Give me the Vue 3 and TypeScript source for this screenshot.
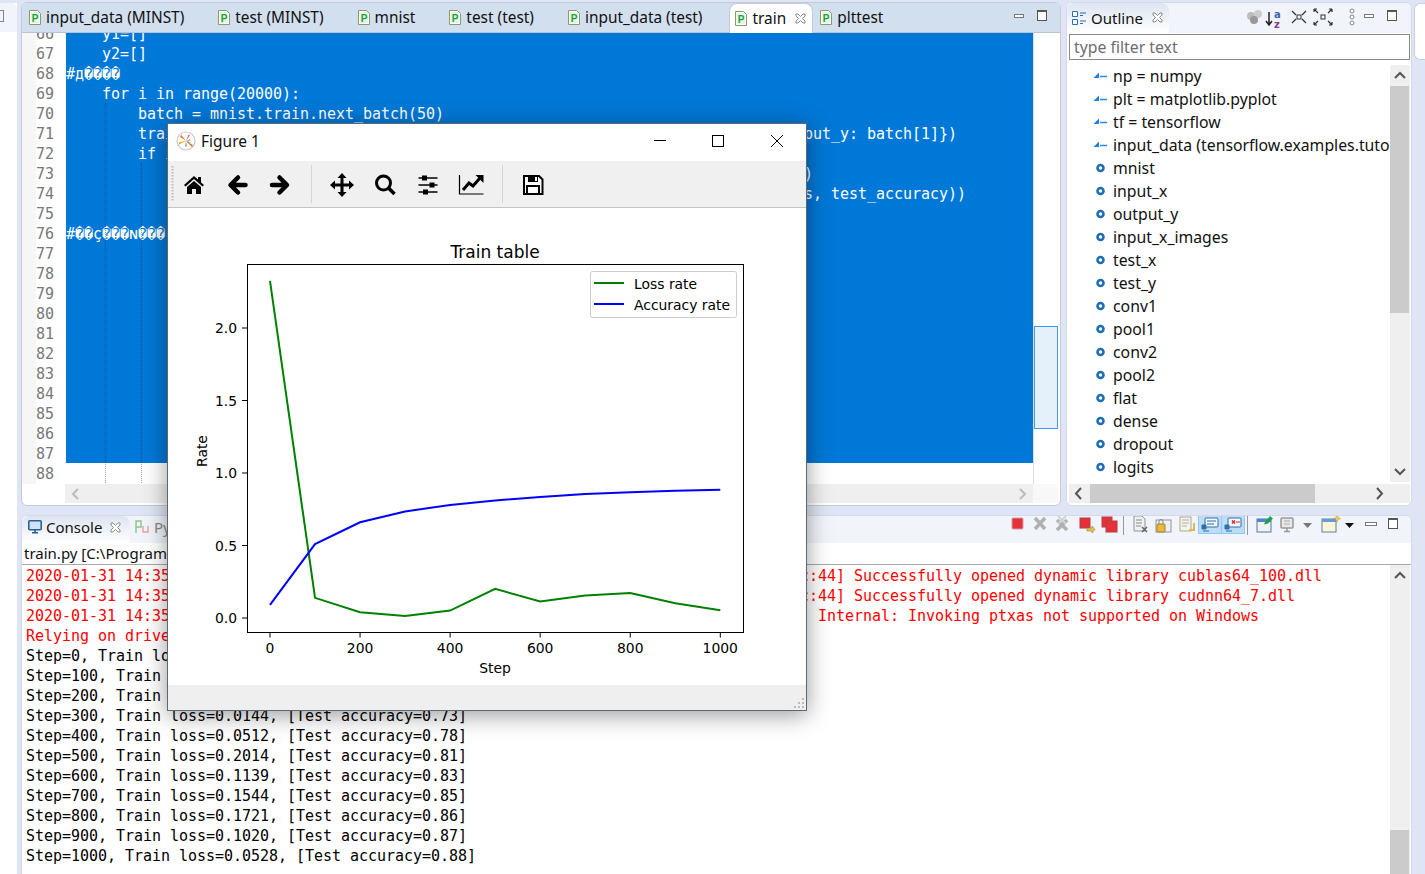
<script setup lang="ts">
const editorTabs = [
  { name: 'input_data (MINST)', active: false },
  { name: 'test (MINST)', active: false },
  { name: 'mnist', active: false },
  { name: 'test (test)', active: false },
  { name: 'input_data (test)', active: false },
  { name: 'train', active: true },
  { name: 'plttest', active: false },
]

const code: Record<number, string> = {
  66: '    y1=[]',
  67: '    y2=[]',
  68: '#д����',
  69: '    for i in range(20000):',
  70: '        batch = mnist.train.next_batch(50)',
  71: '        train_loss, train_op_ = sess.run([loss, train_op], {input_x: batch[0], output_y: batch[1]})',
  72: '        if i % 100 == 0:',
  73: '            test_loss, test_accuracy = sess.run([loss, accuracy], feed_dict=t_dict)',
  74: '            print("Step=%d, Train loss=%.4f, [Test accuracy=%.2f]" % (i, train_loss, test_accuracy))',
  76: '#��ç���ɴ���',
}
const lineNumbers = Array.from({ length: 23 }, (_, i) => 66 + i)

const outline = [
  ['np = numpy', 'imp'], ['plt = matplotlib.pyplot', 'imp'], ['tf = tensorflow', 'imp'],
  ['input_data (tensorflow.examples.tutorials.mnist)', 'imp'], ['mnist', 'var'], ['input_x', 'var'],
  ['output_y', 'var'], ['input_x_images', 'var'], ['test_x', 'var'], ['test_y', 'var'], ['conv1', 'var'],
  ['pool1', 'var'], ['conv2', 'var'], ['pool2', 'var'], ['flat', 'var'], ['dense', 'var'], ['dropout', 'var'], ['logits', 'var'],
]

const loss = [2.325, 0.1389, 0.04, 0.0144, 0.0512, 0.2014, 0.1139, 0.1544, 0.1721, 0.102, 0.0528]
const acc = [0.09, 0.51, 0.66, 0.73, 0.78, 0.81, 0.83, 0.85, 0.86, 0.87, 0.88]
const accCurve = [0.09, 0.51, 0.66, 0.735, 0.78, 0.81, 0.835, 0.855, 0.868, 0.878, 0.885]

const consoleLines = [
  { t: '2020-01-31 14:35:44.406421: I tensorflow/stream_executor/platform/default/dso_loader.cc:44] Successfully opened dynamic library cublas64_100.dll', err: true },
  { t: '2020-01-31 14:35:44.410187: I tensorflow/stream_executor/platform/default/dso_loader.cc:44] Successfully opened dynamic library cudnn64_7.dll', err: true },
  { t: '2020-01-31 14:35:47.123456: W tensorflow/compiler/jit/mark_for_compilation_pass.cc:141] Internal: Invoking ptxas not supported on Windows', err: true },
  { t: 'Relying on driver to perform ptx compilation.', err: true },
  ...loss.map((l, i) => ({
    t: `Step=${i * 100}, Train loss=${l.toFixed(4)}, [Test accuracy=${acc[i].toFixed(2)}]`,
    err: false,
  })),
]

const px = (v: number) => 270 + 0.4503 * v
const py = (v: number) => 618 - 145 * v
const toPoints = (arr: number[]) => arr.map((v, i) => `${px(i * 100)},${py(v)}`).join(' ')
const xTicks = [0, 200, 400, 600, 800, 1000]
const yTicks = [0, 0.5, 1, 1.5, 2]
</script>

<template>
  <div class="root">
    <div class="left-strip"><div class="left-tab"><span class="left-mark"></span></div></div>

    <div class="work">
      <div class="top">
        <section class="editor">
          <div class="editor-tabs">
            <div v-for="tab in editorTabs" :key="tab.name" class="etab" :class="{ active: tab.active }">
              <svg class="picon" width="12" height="15" viewBox="0 0 12 15">
                <path d="M.5.5h8l3 3v11H.5z" fill="#fff" stroke="#8a9a6a" />
                <rect x="2" y="2" width="8" height="11" fill="#e8f5e4" />
                <text x="6" y="11.5" text-anchor="middle" class="picon-t">P</text>
              </svg>
              <span>{{ tab.name }}</span>
              <svg v-if="tab.active" class="xicon" width="11" height="11" viewBox="0 0 11 11">
                <path d="M1 1h2l2.500 2.500L8 1h2v2L7.500 5.500 10 8v2H8L5.500 7.500 3 10H1V8l2.500-2.500L1 3z" fill="#fff" stroke="#8b8b8b" />
              </svg>
            </div>
            <div class="win-btns e">
              <span class="min"></span><span class="max"></span>
            </div>
          </div>
          <div class="editor-body">
            <div class="gutter-pad"></div>
            <div class="numbers">
              <div v-for="n in lineNumbers" :key="n" class="num">{{ n }}</div>
            </div>
            <div class="code">
              <div v-for="n in lineNumbers" :key="n" class="cl" :class="{ sel: n < 88 }">{{ code[n] || ' ' }}</div>
              <i class="guide g1"></i><i class="guide g2"></i>
            </div>
            <div class="ruler"><div class="ruler-box"></div></div>
          </div>
          <div class="editor-hscroll">
            <div class="hs-blank"></div>
            <div class="hs-track">
              <svg width="10" height="12" viewBox="0 0 10 12"><path d="M7 1 2 6l5 5" fill="none" stroke="#bbb" stroke-width="2" /></svg>
              <svg width="10" height="12" viewBox="0 0 10 12"><path d="M3 1l5 5-5 5" fill="none" stroke="#bbb" stroke-width="2" /></svg>
            </div>
            <div class="hs-corner"></div>
          </div>
        </section>

        <section class="outline">
          <div class="outline-head">
            <div class="otab">
              <svg width="14" height="15" viewBox="0 0 14 15">
                <path d="M.5 1.500h5v5h-5zM.5 9.500h5v5h-5z" fill="#fff" stroke="#2a6fb5" />
                <path d="M8 3h6M8 5.500h3M8 11h6M8 13.500h3" stroke="#2a6fb5" />
              </svg>
              <span>Outline</span>
              <svg class="xicon" width="11" height="11" viewBox="0 0 11 11">
                <path d="M1 1h2l2.500 2.500L8 1h2v2L7.500 5.500 10 8v2H8L5.500 7.500 3 10H1V8l2.500-2.500L1 3z" fill="#fff" stroke="#8b8b8b" />
              </svg>
            </div>
            <svg class="otools" width="160" height="24" viewBox="0 0 160 24">
              <circle cx="5" cy="10" r="4" fill="#bbb" /><circle cx="12" cy="8" r="4" fill="#ccc" /><circle cx="8" cy="14" r="4" fill="#999" />
              <path d="M23 6v13M20 15l3 4 3-4" fill="none" stroke="#222" stroke-width="1.500" />
              <text x="28" y="12" class="az a">a</text><text x="28" y="22" class="az z">z</text>
              <rect x="51" y="9" width="4" height="4" fill="none" stroke="#333" />
              <path d="M46 5l4 4M60 5l-4 4M46 17l4-4M60 17l-4-4" stroke="#333" stroke-width="1.200" />
              <rect x="75" y="9" width="4" height="4" fill="none" stroke="#333" />
              <path d="M68 3h3M68 3v3M86 3h-3M86 3v3M68 19h3M68 19v-3M86 19h-3M86 19v-3M68 3l4 4M86 3l-4 4M68 19l4-4M86 19l-4-4" stroke="#333" stroke-width="1.200" />
              <circle cx="106" cy="5" r="2" fill="#fff" stroke="#888" /><circle cx="106" cy="11" r="2" fill="#fff" stroke="#888" /><circle cx="106" cy="17" r="2" fill="#fff" stroke="#888" />
            </svg>
            <div class="win-btns o">
              <span class="min"></span><span class="max"></span>
            </div>
          </div>
          <div class="filter">type filter text</div>
          <div class="tree-wrap">
            <div class="tree">
              <div v-for="row in outline" :key="row[0]" class="trow">
                <svg width="14" height="10" viewBox="0 0 14 10" class="ticon">
                  <template v-if="row[1] === 'imp'">
                    <path d="M6 1.500V7H.5z" fill="#1f7fe0" /><path d="M7 5.500h7" stroke="#2a8cf0" stroke-width="1.600" />
                  </template>
                  <circle v-else cx="7.500" cy="5" r="3" fill="#fff" stroke="#1f6fb0" stroke-width="2.600" />
                </svg>
                <span>{{ row[0] }}</span>
              </div>
            </div>
            <div class="vscroll">
              <svg class="arrow" width="20" height="21" viewBox="0 0 20 21"><path d="M5 13l5-5 5 5" fill="none" stroke="#555" stroke-width="2" /></svg>
              <div class="vthumb"></div>
              <div class="vrest"></div>
              <svg class="arrow" width="20" height="21" viewBox="0 0 20 21"><path d="M5 8l5 5 5-5" fill="none" stroke="#555" stroke-width="2" /></svg>
            </div>
          </div>
          <div class="o-hscroll">
            <svg width="21" height="19" viewBox="0 0 21 19"><path d="M12 4 7 9.500l5 5.500" fill="none" stroke="#555" stroke-width="2" /></svg>
            <div class="o-hthumb"></div>
            <div class="o-hrest"></div>
            <svg width="21" height="19" viewBox="0 0 21 19"><path d="M9 4l5 5.500L9 15" fill="none" stroke="#555" stroke-width="2" /></svg>
          </div>
        </section>
      </div>

      <section class="console">
        <div class="console-head">
          <div class="ctab">
            <svg width="14" height="14" viewBox="0 0 14 14">
              <rect x=".8" y=".8" width="12.400" height="9" rx="1" fill="#cfe3f5" stroke="#2a5f95" stroke-width="1.600" />
              <path d="M4 12.800h6M7 10v3" stroke="#2a5f95" stroke-width="1.600" />
            </svg>
            <span>Console</span>
            <svg class="xicon" width="11" height="11" viewBox="0 0 11 11">
              <path d="M1 1h2l2.500 2.500L8 1h2v2L7.500 5.500 10 8v2H8L5.500 7.500 3 10H1V8l2.500-2.500L1 3z" fill="#fff" stroke="#8b8b8b" />
            </svg>
          </div>
          <div class="ctab2">
            <svg width="14" height="14" viewBox="0 0 14 14">
              <path d="M1 13V1h5v6H1" fill="none" stroke="#8cc88c" stroke-width="1.500" />
              <path d="M8 6v6h5V6" fill="none" stroke="#eea0a0" stroke-width="1.500" />
            </svg>
            <span>PyUnit</span>
          </div>
          <svg class="ctools" width="345" height="24" viewBox="0 0 345 24">
            <rect x="1" y="6" width="11" height="11" rx="1" fill="#e8303a" stroke="#c9a0a0" />
            <path d="M24 6l10 11M34 6L24 17" stroke="#b0b0b0" stroke-width="3.500" />
            <path d="M46 8l10 10M56 8L46 18" stroke="#b0b0b0" stroke-width="3.500" /><path d="M47 4l8 8M55 4l-8 8" stroke="#d2d2d2" stroke-width="2" />
            <rect x="69" y="6" width="10" height="10" fill="#e8303a" stroke="#b04040" /><path d="M76 16h5v-2l3 3.500-3 3.500v-2h-5z" fill="#e8c050" stroke="#a08030" stroke-width=".6" />
            <rect x="91" y="5" width="10" height="10" fill="#e8303a" stroke="#b04040" /><rect x="95" y="9" width="11" height="11" fill="#e8303a" stroke="#b04040" />
            <path d="M112.500 4v19" stroke="#999" />
            <path d="M123 4h8l3 3v12h-11z" fill="#f2f2e8" stroke="#8a94a8" /><path d="M125 8h6M125 11h6M125 14h5" stroke="#7a8ca8" /><path d="M131 15l5 5M136 15l-5 5" stroke="#666" stroke-width="1.600" />
            <rect x="145" y="8" width="15" height="12" fill="#f0f0f0" stroke="#8a94a8" /><rect x="146" y="12" width="8" height="8" rx="1" fill="#e8b840" stroke="#a88020" /><path d="M148 12V9.500a2 2 0 0 1 4 0V12" fill="none" stroke="#888" />
            <rect x="169" y="5" width="11" height="14" fill="#f6f4e6" stroke="#b0a890" /><path d="M171 8h7M171 11h7M171 14h5" stroke="#a8b0b8" /><path d="M178 18h5v-7" fill="none" stroke="#d8b860" stroke-width="2" />
            <rect class="sel-btn" x="187.500" y="1.500" width="23" height="20" />
            <rect class="sel-btn" x="210.500" y="1.500" width="23" height="20" />
            <rect x="194" y="6" width="13" height="9" rx="1" fill="#f2f6fa" stroke="#3070a8" /><path d="M196 9h9M196 12h7" stroke="#3070a8" /><path d="M192 19h6M191 13h4v4h-4z" fill="#3070a8" stroke="#3070a8" />
            <rect x="217" y="6" width="13" height="9" rx="1" fill="#f2f6fa" stroke="#3070a8" /><path d="M221 8.500l3 3M224 8.500l-3 3" stroke="#d83030" stroke-width="1.500" /><path d="M225 10h4" stroke="#d83030" /><path d="M215 19h6M214 13h4v4h-4z" fill="#3070a8" stroke="#3070a8" />
            <path d="M236.500 4v19" stroke="#999" />
            <rect x="246" y="7" width="14" height="13" fill="#f2f2f2" stroke="#4a78a8" /><path d="M246 7h14v3h-14z" fill="#4a88c8" /><path d="M254 10l5-6 3 2.500-5 5-4 1z" fill="#20a050" />
            <rect x="270" y="6" width="12" height="10" rx="1" fill="#e8e8e8" stroke="#999" stroke-width="1.500" /><path d="M273 9h6M273 12h6" stroke="#aaa" /><path d="M273 19.500h6M276 16v3" stroke="#999" stroke-width="1.500" />
            <path d="M292 11h9l-4.500 5z" fill="#777" />
            <rect x="311" y="7" width="14" height="13" fill="#fbf6d8" stroke="#5a80a8" /><path d="M311 7h14v3h-14z" fill="#6a9ad0" /><path d="M326 3l1 2.500 2.500 1-2.500 1-1 2.500-1-2.500-2.500-1 2.500-1z" fill="#f0d060" stroke="#b09030" stroke-width=".5" />
            <path d="M334 11h9l-4.500 5z" fill="#111" />
          </svg>
          <div class="win-btns c">
            <span class="min"></span><span class="max"></span>
          </div>
        </div>
        <div class="cinfo">train.py [C:\Program Files\Python37\python.exe]</div>
        <div class="cbody">
          <div class="clines">
            <div v-for="(l, i) in consoleLines" :key="i" class="cline" :class="{ err: l.err }">{{ l.t }}</div>
          </div>
          <div class="cscroll">
            <svg width="20" height="21" viewBox="0 0 20 21"><path d="M5 13l5-5 5 5" fill="none" stroke="#555" stroke-width="2" /></svg>
            <div class="cthumb"></div>
          </div>
        </div>
      </section>
    </div>

    <div class="right-strip"><div class="right-tab"></div></div>

    <!-- Matplotlib window, floating over the IDE -->
    <div class="figure">
      <div class="fig-title">
        <svg width="20" height="20" viewBox="0 0 20 20">
          <circle cx="10" cy="10" r="9" fill="#fff" stroke="#c8c8c8" stroke-width="1.200" />
          <path d="M10 10 4 5.500 5.500 4zM10 10l6 6 1-2z" fill="#f07020" />
          <path d="M10 10 3 11v2.500z" fill="#f0b020" />
          <path d="M10 10l2.500-6.500 1.500.5z" fill="#e06060" />
          <path d="M10 10l4-2 .5 1.500zM10 10l-1 5.500 2 0z" fill="#80b060" />
          <path d="M10 10l4 1-1 1z" fill="#6080c0" />
        </svg>
        <span class="fig-name">Figure 1</span>
        <svg class="fig-ctl" width="140" height="14" viewBox="0 0 140 14">
          <path d="M0 6.500h12" stroke="#000" />
          <rect x="58.500" y="1.500" width="11" height="11" fill="none" stroke="#000" />
          <path d="M117 1l12 12M129 1l-12 12" stroke="#000" />
        </svg>
      </div>
      <div class="fig-toolbar">
        <svg width="400" height="46" viewBox="168 161 400 46">
          <path d="M172.500 166v36" stroke="#bbb" stroke-width="2" stroke-dasharray="1.500 1.500" />
          <path d="M184 185l10-9 4 3.500V177h3v5.500l3 2.500-1.500 1.500-8.500-7.500-8.500 7.500zM187 187l7-6 7 6v7h-5v-5h-4v5h-5z" fill="#000" />
          <path d="M245.500 185h-14M238 177.500 230.500 185l7.500 7.500" fill="none" stroke="#000" stroke-width="4.500" stroke-linejoin="round" stroke-linecap="round" />
          <path d="M272 185h14M279.500 177.500 287 185l-7.500 7.500" fill="none" stroke="#000" stroke-width="4.500" stroke-linejoin="round" stroke-linecap="round" />
          <path d="M311.500 165v38" stroke="#d4d4d4" />
          <path d="M342 176v18M333 185h18" stroke="#000" stroke-width="3" />
          <path d="M342 173l4.500 5h-9zM342 197l4.500-5h-9zM330 185l5-4.500v9zM354 185l-5-4.500v9z" fill="#000" />
          <circle cx="383.500" cy="183" r="7" fill="none" stroke="#000" stroke-width="3" />
          <path d="M388.500 188l6 6" stroke="#000" stroke-width="3.500" />
          <path d="M418.500 178h19M418.500 185h19M418.500 192h19" stroke="#000" stroke-width="1.500" />
          <rect x="422" y="175.500" width="5" height="5" fill="#000" /><rect x="429.500" y="182.500" width="5" height="5" fill="#000" /><rect x="423" y="189.500" width="5" height="5" fill="#000" />
          <path d="M459.500 175v19h24" fill="none" stroke="#000" stroke-width="1.200" />
          <path d="M463 190l6-7 4 3 7-8" fill="none" stroke="#000" stroke-width="3" />
          <path d="M475.500 175h8v8z" fill="#000" />
          <path d="M502.500 165v38" stroke="#d4d4d4" />
          <path d="M524 176h15l3.500 3.500V194h-18.500z" fill="#fff" stroke="#000" stroke-width="2" />
          <rect x="528" y="176" width="10" height="6" fill="#000" /><rect x="535" y="177" width="2" height="4" fill="#fff" />
          <rect x="527" y="186" width="12" height="8" fill="none" stroke="#000" stroke-width="2" />
        </svg>
      </div>
      <div class="fig-canvas">
        <svg width="638" height="477" viewBox="168 208 638 477">
          <text x="495" y="258" text-anchor="middle" class="t-title">Train table</text>
          <clipPath id="plotclip"><rect x="247" y="264" width="497" height="368" /></clipPath>
          <polyline :points="toPoints(loss)" fill="none" stroke="#008000" stroke-width="2" clip-path="url(#plotclip)" />
          <polyline :points="toPoints(accCurve)" fill="none" stroke="#0000ff" stroke-width="2" clip-path="url(#plotclip)" />
          <rect x="247.500" y="264.500" width="496" height="368" fill="none" stroke="#000" />
          <g v-for="t in xTicks" :key="t">
            <path :d="`M${px(t)} 632.500v5`" stroke="#000" />
            <text :x="px(t)" y="653" text-anchor="middle" class="t-tick">{{ t }}</text>
          </g>
          <g v-for="t in yTicks" :key="t">
            <path :d="`M247 ${py(t)}h-5`" stroke="#000" />
            <text x="237" :y="py(t) + 5" text-anchor="end" class="t-tick">{{ t.toFixed(1) }}</text>
          </g>
          <text x="495" y="673" text-anchor="middle" class="t-tick">Step</text>
          <text x="207" y="451" text-anchor="middle" transform="rotate(-90 207 451)" class="t-tick">Rate</text>
          <rect x="590.500" y="271.500" width="146" height="46" rx="2" fill="#fff" fill-opacity=".8" stroke="#ccc" />
          <path d="M594 283h30" stroke="#008000" stroke-width="2" />
          <path d="M594 304h30" stroke="#0000ff" stroke-width="2" />
          <text x="634" y="289" class="t-tick">Loss rate</text>
          <text x="634" y="310" class="t-tick">Accuracy rate</text>
        </svg>
      </div>
      <div class="fig-status">
        <svg width="12" height="12" viewBox="0 0 12 12">
          <path d="M9 1h2v2H9zM9 5h2v2H9zM5 5h2v2H5zM9 9h2v2H9zM5 9h2v2H5zM1 9h2v2H1z" fill="#bbb" />
        </svg>
      </div>
    </div>
  </div>
</template>

<style>
html, body { margin: 0; padding: 0; background: #dfe5f4; overflow: hidden; }
</style>

<style scoped>
.root {
  position: relative;
  display: flex;
  width: 1425px;
  height: 874px;
  overflow: hidden;
  background: #dfe5f4;
  font-family: "Noto Sans", "Open Sans", sans-serif;
  font-size: 15px;
  color: #111;
}
.left-strip { width: 17px; flex: none; padding-top: 3px; box-sizing: border-box; background: linear-gradient(#dfe5f4 3px, #fff 3px); }
.left-tab { height: 29px; background: #f1f4fb; border-top-right-radius: 6px; position: relative; }
.left-mark { display: block; width: 3px; height: 10px; border: 1px solid #888; border-left: 0; position: absolute; left: 0; top: 7px; }
.work { width: 1391px; margin-left: 4px; flex: none; display: flex; flex-direction: column; }
.top { display: flex; height: 504px; margin-top: 2px; gap: 5px; flex: none; }
.right-strip { margin-left: 2px; flex: 1; padding-top: 3px; }
.right-tab { height: 57px; background: #fff; border: 1px solid #c9d0de; border-right: 0; border-radius: 6px 0 0 6px; box-sizing: border-box; }

.editor {
  width: 1040px; box-sizing: border-box; background: #fff;
  border: 1px solid #c4cad8; border-radius: 6px; display: flex; flex-direction: column; overflow: hidden;
}
.editor-tabs {
  height: 30px; box-sizing: border-box; display: flex; align-items: stretch; background: #d2dfef;
  border-bottom: 1px solid #b9c4d2; flex: none; position: relative; font-size: 15.4px;
}
.etab { display: flex; align-items: center; gap: 5px; padding: 0 27px 0 7px; white-space: nowrap; color: #111; }
.etab.active {
  background: #fff; border-radius: 8px 8px 0 0; border: 1px solid #c4cad8; border-bottom: 0;
  padding: 0 6px 0 5px; margin-bottom: -1px; height: 30px; box-sizing: border-box;
}
.picon { flex: none; }
.picon-t { font: bold 10px "Liberation Sans", sans-serif; fill: #1aa23c; }
.xicon { margin-left: 4px; flex: none; }
.win-btns { position: absolute; display: flex; }
.win-btns .min { width: 10px; height: 4px; border: 1px solid #777; box-sizing: border-box; background: #fff; margin-top: 4px; }
.win-btns .max { width: 10px; height: 11px; border: 1px solid #555; border-top-width: 2px; box-sizing: border-box; background: #fff; margin-left: 13px; }
.win-btns.e { right: 13px; top: 7px; }
.win-btns.o { right: 14px; top: 7px; }
.win-btns.c { right: 13px; top: 2px; }
.win-btns.c .min { width: 12px; }
.win-btns.c .max { margin-left: 11px; }

.editor-body { height: 451px; display: flex; overflow: hidden; flex: none; font-family: "DejaVu Sans Mono", monospace; font-size: 15px; letter-spacing: -0.03px; line-height: 20px; }
.gutter-pad { width: 14px; background: #f6f6f6; flex: none; }
.numbers { width: 30px; flex: none; color: #787878; margin-top: -10px; }
.num, .cl { height: 20px; box-sizing: border-box; padding-top: 1px; }
.code { width: 967px; flex: none; margin-top: -10px; position: relative; white-space: pre; overflow: hidden; height: 470px; }
.cl.sel { background: #0078d7; color: #fff; }
.guide { position: absolute; width: 0; border-left: 1px dotted rgba(0, 0, 0, .35); bottom: 0; }
.g1 { left: 39px; top: 80px; }
.g2 { left: 75px; top: 140px; }
.ruler { flex: 1; border-left: 1px solid #dedede; position: relative; }
.ruler-box {
  position: absolute; left: 0; right: 2px; top: 293px; height: 103px;
  background: #e6f0fb; border: 1px solid #3d9bf5; box-sizing: border-box;
}
.editor-hscroll { height: 19px; display: flex; flex: none; }
.hs-blank { width: 43px; }
.hs-track { width: 968px; background: #efefef; display: flex; justify-content: space-between; align-items: center; padding: 0 6px; box-sizing: border-box; }
.hs-corner { width: 25px; background: #f8f8f8; }

.outline {
  width: 346px; box-sizing: border-box; background: #fff; border: 1px solid #d5daea; border-radius: 6px;
  display: flex; flex-direction: column; overflow: hidden; position: relative;
}
.outline-head { height: 30px; background: #f1f4fb; position: relative; display: flex; flex: none; }
.otab {
  width: 102px; box-sizing: border-box; padding: 0 0 1px 5px; display: flex; align-items: center; gap: 5px;
  background: linear-gradient(#dde5f1, #fff); border-radius: 8px 8px 0 0;
}
.otools { position: absolute; left: 179px; top: 3px; }
.filter {
  height: 26px; box-sizing: border-box; margin: 1px 1px 0 2px; border: 1px solid #8a8a8a; color: #6d6d6d;
  line-height: 24px; padding-left: 4px; flex: none; font-size: 15.8px;
}
.tree-wrap { display: flex; flex: none; height: 417px; margin: 5px 0 0 2px; }
.tree { width: 321px; overflow: hidden; margin-top: -1px; }
.trow { height: 23px; display: flex; align-items: center; white-space: nowrap; padding-left: 24px; gap: 6px; font-size: 15.8px; }
.ticon { flex: none; }
.vscroll { width: 20px; background: #efefef; display: flex; flex-direction: column; }
.arrow { flex: none; }
.vthumb { height: 227px; background: #cbcbcb; width: 19px; flex: none; }
.vrest { flex: 1; }
.o-hscroll { display: flex; height: 19px; margin: 2px 1px 0 2px; padding-right: 21px; background: #efefef; flex: none; }
.o-hthumb { width: 225px; background: #cbcbcb; flex: none; }
.o-hrest { flex: 1; }

.console {
  margin-top: 9px; flex: 1; background: #fff; border: 1px solid #d5daea; border-bottom: 0;
  border-radius: 6px 6px 0 0; display: flex; flex-direction: column; overflow: hidden; box-sizing: border-box; position: relative;
}
.console-head { height: 27px; background: #f1f4fb; position: relative; display: flex; flex: none; }
.ctab {
  width: 108px; box-sizing: border-box; padding: 0 0 5px 6px; display: flex; align-items: center; gap: 4px;
  background: linear-gradient(#dde5f1, #fff); border-radius: 8px 8px 0 0;
}
.ctab2 { display: flex; align-items: center; gap: 5px; padding: 0 0 5px 5px; color: #888; }
.ctools { position: absolute; left: 989px; top: -4px; }
.sel-btn { fill: #bcdcf8; stroke: #90c8f6; }
.az { font: bold 10px "DejaVu Sans", sans-serif; }
.az.a { fill: #3a66b0; }
.az.z { fill: #8a3a8a; }
.cinfo { height: 21px; line-height: 21px; padding-left: 2px; border-bottom: 1px solid #a8a8a8; white-space: nowrap; flex: none; }
.cbody { flex: 1; display: flex; overflow: hidden; }
.clines {
  width: 1364px; padding: 1px 0 0 4px; flex: none; white-space: pre; overflow: hidden; box-sizing: content-box;
  font-family: "DejaVu Sans Mono", monospace; font-size: 15px; letter-spacing: -0.03px; line-height: 20px; color: #000;
}
.cline { height: 20px; }
.cline.err { color: #ff0000; }
.cscroll { width: 20px; background: #efefef; display: flex; flex-direction: column; position: relative; }
.cthumb { position: absolute; left: 0; width: 19px; top: 265px; bottom: 0; background: #cbcbcb; }

.figure {
  position: absolute; left: 167px; top: 123px; width: 640px; height: 588px; box-sizing: border-box;
  background: #fff; border: 1px solid #5d6672; box-shadow: 0 4px 22px rgba(0, 0, 0, .4);
  display: flex; flex-direction: column;
}
.fig-title { height: 37px; box-sizing: border-box; display: flex; align-items: center; padding: 0 0 4px 8px; gap: 5px; flex: none; position: relative; }
.fig-name { font-size: 15.5px; }
.fig-ctl { position: absolute; left: 486px; top: 10px; }
.fig-toolbar { height: 46px; background: #f0f0f0; border-bottom: 1px solid #c4c4c4; flex: none; }
.fig-canvas { height: 477px; flex: none; }
.fig-canvas svg, .fig-toolbar svg { display: block; }
.t-title { font: 17px "DejaVu Sans", sans-serif; fill: #000; }
.t-tick { font: 13.900px "DejaVu Sans", sans-serif; fill: #000; }
.fig-status { flex: 1; background: #efefef; display: flex; justify-content: flex-end; align-items: flex-end; padding: 0 1px 1px 0; }
</style>
